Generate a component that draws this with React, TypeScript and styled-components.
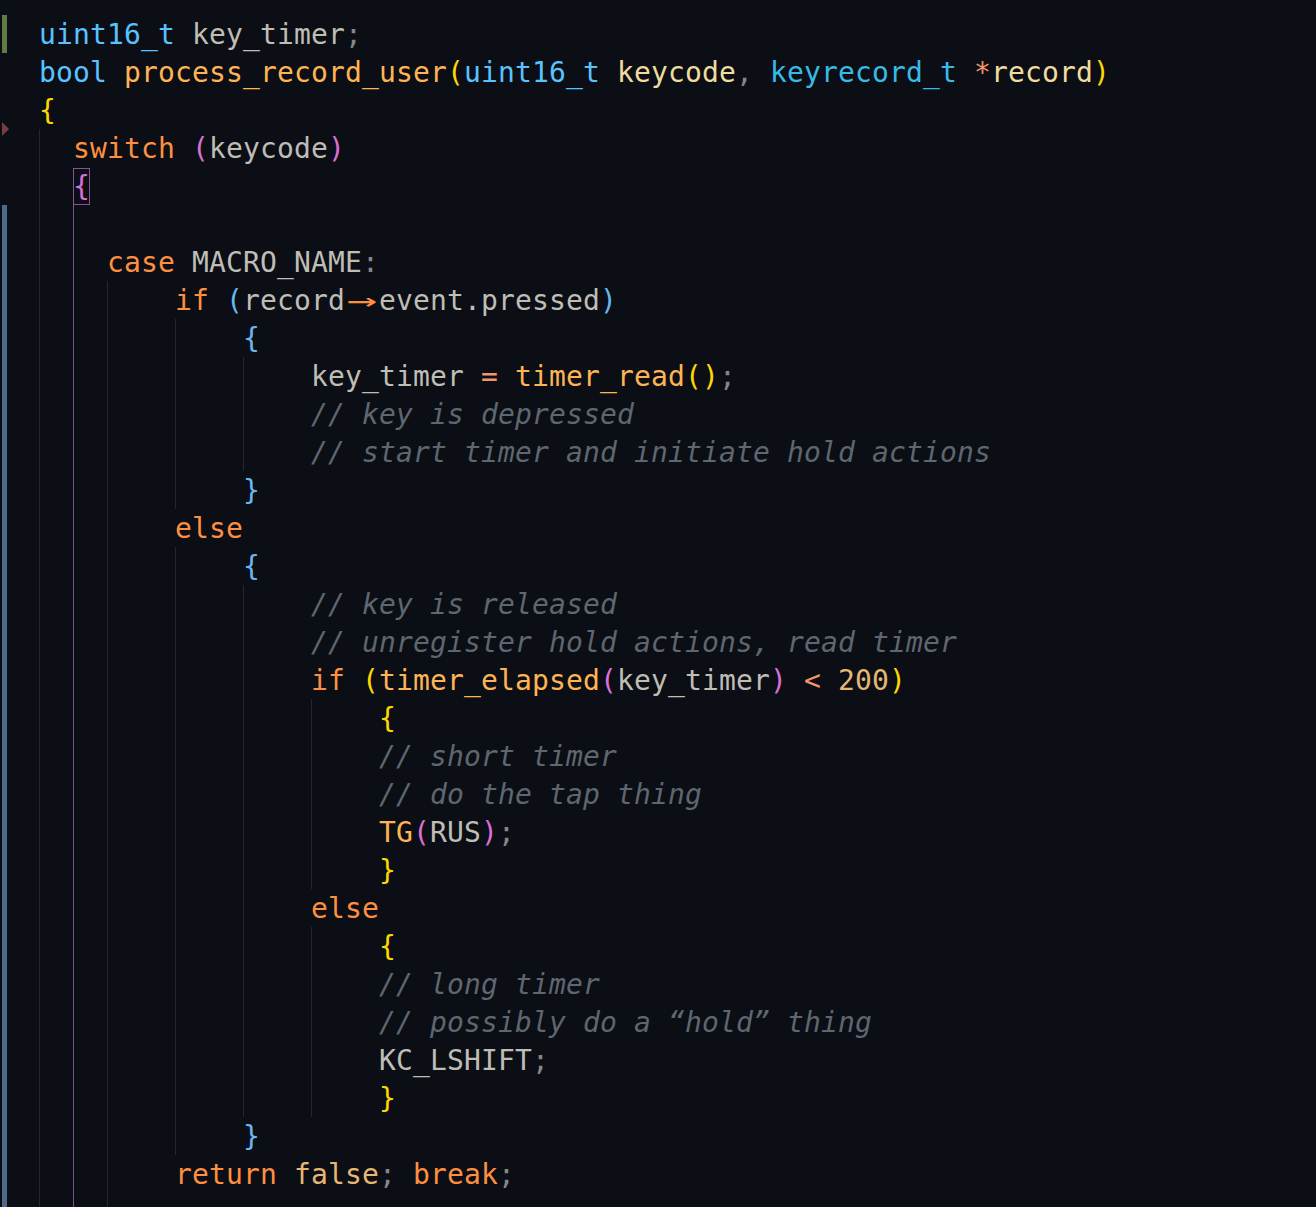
import React from "react";
import styled, { createGlobalStyle, css } from "styled-components";

const CH = 17;
const LINE_H = 38;

const GlobalStyle = createGlobalStyle`
  html, body {
    margin: 0;
    padding: 0;
    background: #0b0e14;
    height: 1207px;
    overflow: hidden;
  }
`;

const Editor = styled.div`
  background: #0b0e14;
  height: 1207px;
  overflow: hidden;
  padding-top: 15px;
  box-sizing: border-box;
  display: flex;
  flex-direction: column;
  font-family: "DejaVu Sans Mono", "Liberation Mono", monospace;
  font-size: 28px;
  letter-spacing: 0.14px;
  color: #bfbdb6;
`;

const Row = styled.div`
  display: flex;
  align-items: stretch;
  height: ${LINE_H}px;
  flex: 0 0 ${LINE_H}px;
`;

const Gutter = styled.div`
  position: relative;
  width: 39px;
  flex: 0 0 39px;
  display: flex;
  padding-left: 2px;
  box-sizing: border-box;
`;

type GitKind = "add" | "mod" | undefined;

const GitBar = styled.div<{ $kind: GitKind }>`
  width: 5px;
  height: 100%;
  background: ${(p) =>
    p.$kind === "add" ? "#5f7c47" : p.$kind === "mod" ? "#4b6a8c" : "transparent"};
`;

const DeleteMarker = styled.div`
  position: absolute;
  left: 2px;
  top: -7px;
  width: 0;
  height: 0;
  border-top: 7px solid transparent;
  border-bottom: 7px solid transparent;
  border-left: 7px solid #7b3b44;
`;

const IndentCell = styled.div<{ $cols: number; $active: boolean }>`
  width: ${(p) => p.$cols * CH}px;
  flex: 0 0 ${(p) => p.$cols * CH}px;
  height: 100%;
  box-sizing: border-box;
  border-left: 1px solid ${(p) => (p.$active ? "#7d4f8a" : "#232830")};
`;

const CodeText = styled.div`
  white-space: pre;
  line-height: ${LINE_H}px;
  height: ${LINE_H}px;
  padding-top: 0.5px;
  box-sizing: border-box;
`;

type Kind =
  | "fg"
  | "type"
  | "tag"
  | "func"
  | "kw"
  | "param"
  | "op"
  | "punct"
  | "comment"
  | "num"
  | "b1"
  | "b2"
  | "b3";

const colors: Record<Kind, string> = {
  fg: "#bfbdb6",
  type: "#59c2ff",
  tag: "#39bae6",
  func: "#ffb454",
  kw: "#ff8f40",
  param: "#efdc9e",
  op: "#f29668",
  punct: "#85878a",
  comment: "#5e6670",
  num: "#e6b673",
  b1: "#ffd700",
  b2: "#da70d6",
  b3: "#6ab7f0",
};

const Tok = styled.span<{ $kind: Kind; $boxed?: boolean }>`
  color: ${(p) => colors[p.$kind]};
  ${(p) =>
    p.$kind === "comment" &&
    css`
      font-style: italic;
    `}
  ${(p) =>
    p.$boxed &&
    css`
      display: inline-block;
      width: ${CH}px;
      height: ${LINE_H - 1}px;
      vertical-align: top;
      outline: 1.5px solid #8b5290;
      outline-offset: -1px;
    `}
`;

const Arrow = styled.span`
  display: inline-block;
  width: ${CH * 2}px;
  text-align: center;
  color: #ff8f40;
  transform: scaleX(1.8);
  vertical-align: top;
`;

type T = [Kind | "arrow", string, boolean?];

interface Line {
  indent: number;
  guides: number[];
  git?: GitKind;
  del?: boolean;
  toks: T[];
}

const g1 = [0];
const g2 = [0, 2];
const g3 = [0, 2, 4];
const g4 = [0, 2, 4, 8];
const g5 = [0, 2, 4, 8, 12];
const g6 = [0, 2, 4, 8, 12, 16];

const lines: Line[] = [
  { indent: 0, guides: [], git: "add", toks: [["type", "uint16_t"], ["fg", " key_timer"], ["punct", ";"]] },
  {
    indent: 0,
    guides: [],
    toks: [
      ["type", "bool"],
      ["fg", " "],
      ["func", "process_record_user"],
      ["b1", "("],
      ["type", "uint16_t"],
      ["fg", " "],
      ["param", "keycode"],
      ["punct", ","],
      ["fg", " "],
      ["tag", "keyrecord_t"],
      ["fg", " "],
      ["op", "*"],
      ["param", "record"],
      ["b1", ")"],
    ],
  },
  { indent: 0, guides: [], toks: [["b1", "{"]] },
  {
    indent: 2,
    guides: g1,
    del: true,
    toks: [["kw", "switch"], ["fg", " "], ["b2", "("], ["fg", "keycode"], ["b2", ")"]],
  },
  { indent: 2, guides: g1, toks: [["b2", "{", true]] },
  { indent: 4, guides: g2, git: "mod", toks: [] },
  { indent: 4, guides: g2, git: "mod", toks: [["kw", "case"], ["fg", " MACRO_NAME"], ["punct", ":"]] },
  {
    indent: 8,
    guides: g3,
    git: "mod",
    toks: [
      ["kw", "if"],
      ["fg", " "],
      ["b3", "("],
      ["fg", "record"],
      ["arrow", "→"],
      ["fg", "event.pressed"],
      ["b3", ")"],
    ],
  },
  { indent: 12, guides: g4, git: "mod", toks: [["b3", "{"]] },
  {
    indent: 16,
    guides: g5,
    git: "mod",
    toks: [
      ["fg", "key_timer "],
      ["op", "="],
      ["fg", " "],
      ["func", "timer_read"],
      ["b1", "()"],
      ["punct", ";"],
    ],
  },
  { indent: 16, guides: g5, git: "mod", toks: [["comment", "// key is depressed"]] },
  { indent: 16, guides: g5, git: "mod", toks: [["comment", "// start timer and initiate hold actions"]] },
  { indent: 12, guides: g4, git: "mod", toks: [["b3", "}"]] },
  { indent: 8, guides: g3, git: "mod", toks: [["kw", "else"]] },
  { indent: 12, guides: g4, git: "mod", toks: [["b3", "{"]] },
  { indent: 16, guides: g5, git: "mod", toks: [["comment", "// key is released"]] },
  { indent: 16, guides: g5, git: "mod", toks: [["comment", "// unregister hold actions, read timer"]] },
  {
    indent: 16,
    guides: g5,
    git: "mod",
    toks: [
      ["kw", "if"],
      ["fg", " "],
      ["b1", "("],
      ["func", "timer_elapsed"],
      ["b2", "("],
      ["fg", "key_timer"],
      ["b2", ")"],
      ["fg", " "],
      ["op", "<"],
      ["fg", " "],
      ["num", "200"],
      ["b1", ")"],
    ],
  },
  { indent: 20, guides: g6, git: "mod", toks: [["b1", "{"]] },
  { indent: 20, guides: g6, git: "mod", toks: [["comment", "// short timer"]] },
  { indent: 20, guides: g6, git: "mod", toks: [["comment", "// do the tap thing"]] },
  {
    indent: 20,
    guides: g6,
    git: "mod",
    toks: [["func", "TG"], ["b2", "("], ["fg", "RUS"], ["b2", ")"], ["punct", ";"]],
  },
  { indent: 20, guides: g6, git: "mod", toks: [["b1", "}"]] },
  { indent: 16, guides: g5, git: "mod", toks: [["kw", "else"]] },
  { indent: 20, guides: g6, git: "mod", toks: [["b1", "{"]] },
  { indent: 20, guides: g6, git: "mod", toks: [["comment", "// long timer"]] },
  { indent: 20, guides: g6, git: "mod", toks: [["comment", "// possibly do a “hold” thing"]] },
  { indent: 20, guides: g6, git: "mod", toks: [["fg", "KC_LSHIFT"], ["punct", ";"]] },
  { indent: 20, guides: g6, git: "mod", toks: [["b1", "}"]] },
  { indent: 12, guides: g4, git: "mod", toks: [["b3", "}"]] },
  {
    indent: 8,
    guides: g3,
    git: "mod",
    toks: [
      ["kw", "return"],
      ["fg", " "],
      ["num", "false"],
      ["punct", ";"],
      ["fg", " "],
      ["kw", "break"],
      ["punct", ";"],
    ],
  },
  { indent: 8, guides: g3, git: "mod", toks: [] },
];

function CodeLine({ line }: { line: Line }) {
  const segs = line.guides.map((g, i) => {
    const next = i + 1 < line.guides.length ? line.guides[i + 1] : line.indent;
    return { col: g, cols: next - g };
  });
  return (
    <Row>
      <Gutter>
        <GitBar $kind={line.git} />
        {line.del && <DeleteMarker />}
      </Gutter>
      {segs.map((s) => (
        <IndentCell key={s.col} $cols={s.cols} $active={s.col === 2 && !!line.git} />
      ))}
      <CodeText>
        {line.toks.map(([k, text, boxed], i) =>
          k === "arrow" ? (
            <Arrow key={i}>{text}</Arrow>
          ) : (
            <Tok key={i} $kind={k} $boxed={boxed}>
              {text}
            </Tok>
          )
        )}
      </CodeText>
    </Row>
  );
}

export default function App() {
  return (
    <>
      <GlobalStyle />
      <Editor>
        {lines.map((l, i) => (
          <CodeLine key={i} line={l} />
        ))}
      </Editor>
    </>
  );
}
